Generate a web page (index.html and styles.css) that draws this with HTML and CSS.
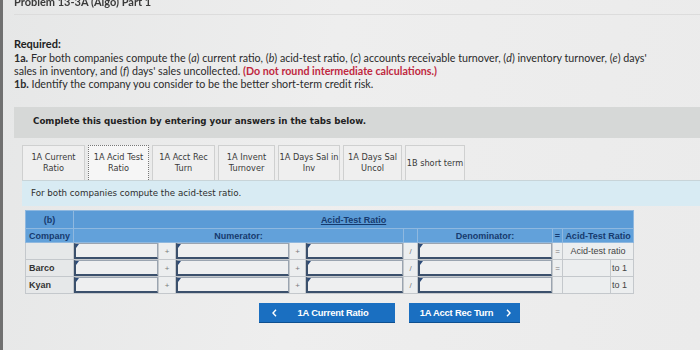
FILE: index.html
```html
<!DOCTYPE html>
<html lang="en">
<head>
    <meta charset="UTF-8">
    <meta name="viewport" content="width=device-width, initial-scale=1.0">
    <title>Problem 13-3A (Algo) Part 1</title>
    <link rel="stylesheet" href="styles.css">
</head>
<body>
    <div class="page">
        <div class="title-bar">
            <h2 class="problem-title">Problem 13-3A (Algo) Part 1</h2>
        </div>

        <div class="required">
            <h3>Required:</h3>
            <p>
                <b>1a.</b> For both companies compute the (<i>a</i>) current ratio, (<i>b</i>) acid-test ratio, (<i>c</i>) accounts receivable turnover, (<i>d</i>) inventory turnover, (<i>e</i>) days'<br>
                sales in inventory, and (<i>f</i>) days' sales uncollected. <span class="warn">(Do not round intermediate calculations.)</span><br>
                <b>1b.</b> Identify the company you consider to be the better short-term credit risk.
            </p>
        </div>

        <div class="instructions">Complete this question by entering your answers in the tabs below.</div>

        <div class="tabs-area">
            <div class="tabs">
                <div class="tab t1">1A Current<br>Ratio</div>
                <div class="tab t2 active">1A Acid Test<br>Ratio</div>
                <div class="tab t3">1A Acct Rec<br>Turn</div>
                <div class="tab t4">1A Invent<br>Turnover</div>
                <div class="tab t5">1A Days Sal in<br>Inv</div>
                <div class="tab t6">1A Days Sal<br>Uncol</div>
                <div class="tab t7">1B short term</div>
            </div>
            <div class="panel-note">For both companies compute the acid-test ratio.</div>

            <table class="ratio-table">
                <colgroup>
                    <col style="width:48px">
                    <col style="width:85px">
                    <col style="width:17px">
                    <col style="width:114px">
                    <col style="width:16px">
                    <col style="width:98px">
                    <col style="width:14px">
                    <col style="width:135px">
                    <col style="width:10px">
                    <col style="width:48px">
                    <col style="width:23px">
                </colgroup>
                <thead>
                    <tr class="head-1">
                        <th>(b)</th>
                        <th colspan="10"><u>Acid-Test Ratio</u></th>
                    </tr>
                    <tr class="head-2">
                        <th>Company</th>
                        <th colspan="5">Numerator:</th>
                        <th></th>
                        <th>Denominator:</th>
                        <th class="op-head">=</th>
                        <th colspan="2">Acid-Test Ratio</th>
                    </tr>
                </thead>
                <tbody>
                    <tr>
                        <td class="company"></td>
                        <td class="field"><div class="box"></div></td>
                        <td class="op">+</td>
                        <td class="field"><div class="box"></div></td>
                        <td class="op">+</td>
                        <td class="field"><div class="box"></div></td>
                        <td class="op">/</td>
                        <td class="field"><div class="box"></div></td>
                        <td class="op">=</td>
                        <td class="result-label" colspan="2">Acid-test ratio</td>
                    </tr>
                    <tr>
                        <td class="company">Barco</td>
                        <td class="field"><div class="box"></div></td>
                        <td class="op">+</td>
                        <td class="field"><div class="box"></div></td>
                        <td class="op">+</td>
                        <td class="field"><div class="box"></div></td>
                        <td class="op">/</td>
                        <td class="field"><div class="box"></div></td>
                        <td class="op">=</td>
                        <td class="result"></td>
                        <td class="unit">to 1</td>
                    </tr>
                    <tr>
                        <td class="company">Kyan</td>
                        <td class="field"><div class="box"></div></td>
                        <td class="op">+</td>
                        <td class="field"><div class="box"></div></td>
                        <td class="op">+</td>
                        <td class="field"><div class="box"></div></td>
                        <td class="op">/</td>
                        <td class="field"><div class="box"></div></td>
                        <td class="op"></td>
                        <td class="result"></td>
                        <td class="unit">to 1</td>
                    </tr>
                </tbody>
            </table>

            <div class="nav-buttons">
                <button class="nav-btn prev">
                    <svg width="5" height="8" viewBox="0 0 5 8"><polyline points="4,0.8 1,4 4,7.2" fill="none" stroke="#fff" stroke-width="1.4"/></svg>
                    <span>1A Current Ratio</span>
                </button>
                <button class="nav-btn next">
                    <span>1A Acct Rec Turn</span>
                    <svg width="5" height="8" viewBox="0 0 5 8"><polyline points="1,0.8 4,4 1,7.2" fill="none" stroke="#fff" stroke-width="1.4"/></svg>
                </button>
            </div>
        </div>
    </div>
</body>
</html>
```

FILE: styles.css
```css
html, body {
    margin: 0;
    padding: 0;
}
body {
    width: 700px;
    height: 350px;
    overflow: hidden;
    background: linear-gradient(100deg, #e6e7e7 0%, #eeeeee 45%, #ebebeb 100%);
    border-left: 3px solid #707070;
    box-sizing: border-box;
    font-family: Lato, "Open Sans", sans-serif;
    color: #2b2b2b;
}
.page {
    padding-left: 11px;
}
.title-bar {
    height: 14px;
    overflow: hidden;
    border-bottom: 1px solid #dcdcdc;
}
.problem-title {
    margin: -5px 0 0 0;
    font-size: 11px;
    line-height: 14px;
    font-weight: bold;
    color: #3a3a3a;
    white-space: nowrap;
    filter: blur(0.6px);
}
.required {
    margin-top: 22px;
}
.required h3 {
    margin: 0;
    font-size: 11px;
    line-height: 13px;
    font-weight: bold;
    color: #222;
}
.required p {
    margin: 1px 0 0 0;
    font-size: 10.7px;
    line-height: 13px;
    white-space: nowrap;
}
.warn {
    color: #c0283f;
    font-weight: bold;
}
.instructions {
    margin-top: 17px;
    height: 31px;
    line-height: 29px;
    padding-left: 19px;
    background: #d6d8d7;
    font-family: "DejaVu Sans", sans-serif;
    font-size: 8.7px;
    font-weight: bold;
    color: #222;
}
.tabs-area {
    margin-left: 8px;
    margin-top: 7px;
}
.tabs {
    display: flex;
    gap: 3px;
    height: 35px;
}
.tab {
    box-sizing: border-box;
    height: 35px;
    padding-top: 6px;
    background: #efefef;
    border: 1px solid #cfd0d0;
    border-bottom: none;
    text-align: center;
    font-family: "DejaVu Sans", sans-serif;
    font-size: 8.2px;
    line-height: 11px;
    color: #3a3a3a;
    white-space: nowrap;
}
.tab.active {
    background: #f6f6f6;
    border: 1px dotted #777;
    border-bottom: none;
}
.t1 { width: 63px; }
.t2 { width: 61px; }
.t3 { width: 63px; }
.t4 { width: 57px; }
.t5 { width: 62px; }
.t6 { width: 59px; }
.t7 { width: 60px; padding-top: 12px; }
.panel-note {
    height: 25px;
    line-height: 24px;
    padding-left: 9px;
    background: #d8ebf3;
    border-top: 1px solid #c8d4d8;
    font-family: "DejaVu Sans", sans-serif;
    font-size: 8.7px;
    color: #2d2d2d;
}
.ratio-table {
    margin: 4px 0 0 3px;
    border-collapse: collapse;
    table-layout: fixed;
    width: 608px;
    font-family: "Liberation Sans", Arial, sans-serif;
    font-size: 9px;
}
.ratio-table th {
    color: #163a6e;
    font-weight: bold;
    border: 1px solid #8fb8df;
    padding: 0;
    text-align: center;
}
.head-1 th {
    height: 17px;
    background: #5b9bd6;
}
.head-2 th {
    height: 13px;
    background: #62a1da;
}
.op-head {
    color: #ffffff;
}
.ratio-table td {
    height: 16px;
    border: 1px solid #c4c8cc;
    padding: 0;
    background: #eceeef;
}
.company {
    padding-left: 3px !important;
    font-weight: bold;
    color: #333;
    background: #e6e8e9 !important;
}
.box {
    position: relative;
    box-sizing: border-box;
    height: 16px;
    background: #eeeff0;
    border: 1px solid #9aa4b0;
    border-left: 2px solid #3b506c;
    border-bottom: 2px solid #3b506c;
}
.box::before {
    content: "";
    position: absolute;
    left: 0;
    top: 0;
    border-top: 4px solid #2b4a78;
    border-right: 3px solid transparent;
}
.op {
    text-align: center;
    color: #7a7a7a;
    font-size: 8px;
}
.result-label {
    text-align: center;
    color: #444;
}
.unit {
    color: #444;
    padding-left: 1px !important;
}
.nav-buttons {
    display: flex;
    gap: 14px;
    margin: 9px 0 0 237px;
}
.nav-btn {
    display: flex;
    align-items: center;
    justify-content: center;
    height: 20px;
    padding: 0;
    border: none;
    border-bottom: 1px solid #0e4f8f;
    background: #1a6fc1;
    color: #fff;
    font-family: "Liberation Sans", Arial, sans-serif;
    font-size: 9.4px;
    font-weight: bold;
    letter-spacing: -0.2px;
}
.nav-btn.prev {
    width: 136px;
    gap: 21px;
    padding-right: 14px;
}
.nav-btn.next {
    width: 111px;
    gap: 13px;
    padding-left: 2px;
}
```
